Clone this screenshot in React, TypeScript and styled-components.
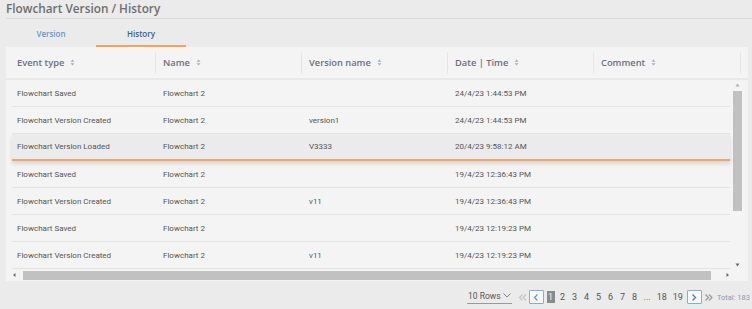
import React from "react";
import styled, { createGlobalStyle } from "styled-components";

const GlobalStyle = createGlobalStyle`
  html, body {
    margin: 0;
    padding: 0;
    background: #ebebeb;
  }
  body {
    font-family: Roboto, "Liberation Sans", sans-serif;
  }
`;

interface HistoryRow {
  eventType: string;
  name: string;
  versionName: string;
  dateTime: string;
  comment: string;
}

const rows: HistoryRow[] = [
  { eventType: "Flowchart Saved", name: "Flowchart 2", versionName: "", dateTime: "24/4/23 1:44:53 PM", comment: "" },
  { eventType: "Flowchart Version Created", name: "Flowchart 2", versionName: "version1", dateTime: "24/4/23 1:44:53 PM", comment: "" },
  { eventType: "Flowchart Version Loaded", name: "Flowchart 2", versionName: "V3333", dateTime: "20/4/23 9:58:12 AM", comment: "" },
  { eventType: "Flowchart Saved", name: "Flowchart 2", versionName: "", dateTime: "19/4/23 12:36:43 PM", comment: "" },
  { eventType: "Flowchart Version Created", name: "Flowchart 2", versionName: "v11", dateTime: "19/4/23 12:36:43 PM", comment: "" },
  { eventType: "Flowchart Saved", name: "Flowchart 2", versionName: "", dateTime: "19/4/23 12:19:23 PM", comment: "" },
  { eventType: "Flowchart Version Created", name: "Flowchart 2", versionName: "v11", dateTime: "19/4/23 12:19:23 PM", comment: "" }
];

const columns = ["Event type", "Name", "Version name", "Date | Time", "Comment"];
const pages = ["2", "3", "4", "5", "6", "7", "8", "...", "18", "19"];

const PageStyled = styled.div`
  width: 752px;
  height: 309px;
  padding-left: 6px;
  box-sizing: border-box;
  overflow: hidden;
`;

const TitleStyled = styled.div`
  height: 19px;
  box-sizing: border-box;
  border-bottom: 1px solid #d9d9d9;
  font-family: "Open Sans", sans-serif;
  font-weight: 600;
  font-size: 11.8px;
  line-height: 16px;
  color: #6e6e6e;
`;

const TabsStyled = styled.div`
  display: flex;
  height: 28px;
`;

const TabStyled = styled.div<{ $active?: boolean }>`
  width: 90px;
  display: flex;
  align-items: center;
  justify-content: center;
  box-sizing: border-box;
  padding-top: 2px;
  font-family: "Open Sans", sans-serif;
  font-size: 8px;
  font-weight: 600;
  color: ${(p) => (p.$active ? "#3b5d8f" : "#5d9ad0")};
  border-bottom: 2px solid ${(p) => (p.$active ? "#f3a35e" : "transparent")};
`;

const PanelStyled = styled.div`
  width: 742px;
  height: 234px;
  background: #f4f4f4;
  display: flex;
  flex-direction: column;
`;

const HeaderRowStyled = styled.div`
  display: grid;
  grid-template-columns: 146px 146px 146px 146px 147px;
  height: 31px;
  padding-left: 4px;
  border-bottom: 2px solid #e9e9e9;
  align-items: center;
`;

const HeaderCellStyled = styled.div`
  height: 22px;
  display: flex;
  align-items: center;
  gap: 6px;
  padding-left: 7px;
  border-right: 1px solid #e6e6e6;
  font-family: "Open Sans", sans-serif;
  font-weight: 600;
  font-size: 9.3px;
  color: #6b6f82;
`;

const SortIconStyled = styled.svg`
  width: 5px;
  height: 7px;
`;

const BodyWrapStyled = styled.div`
  display: flex;
  height: 189px;
  padding-left: 6px;
`;

const RowsStyled = styled.div`
  width: 718px;
  display: flex;
  flex-direction: column;
`;

const RowStyled = styled.div<{ $selected?: boolean }>`
  display: grid;
  grid-template-columns: 146px 146px 146px 146px 1fr;
  padding-left: 5px;
  height: 27px;
  box-sizing: border-box;
  align-items: center;
  font-size: 8px;
  color: #555;
  background: ${(p) => (p.$selected ? "#ebebeb" : "#f4f4f4")};
  border-bottom: ${(p) => (p.$selected ? "2px solid #eba66a" : "1px solid #e4e4e4")};
  box-shadow: ${(p) => (p.$selected ? "0 3px 4px rgba(0,0,0,0.12)" : "none")};
  position: relative;
  z-index: ${(p) => (p.$selected ? 1 : 0)};
`;

const VScrollStyled = styled.div`
  width: 12px;
  display: flex;
  flex-direction: column;
  align-items: center;
  padding: 3px 0 2px 2px;
  box-sizing: border-box;
`;

const ArrowStyled = styled.svg`
  width: 5px;
  height: 4px;
  flex: none;
`;

const VThumbStyled = styled.div`
  width: 9px;
  height: 120px;
  margin-top: 4px;
  background: #c1c1c1;
`;

const SpacerStyled = styled.div`
  flex: 1;
`;

const HScrollStyled = styled.div`
  display: flex;
  align-items: center;
  height: 12px;
  margin-left: 6px;
  width: 718px;
`;

const HThumbStyled = styled.div`
  width: 688px;
  height: 9px;
  margin-left: 6px;
  background: #c1c1c1;
`;

const PagerStyled = styled.div`
  display: flex;
  align-items: center;
  justify-content: flex-end;
  height: 28px;
  padding: 4px 2px 0 0;
  box-sizing: border-box;
  font-size: 8.5px;
  color: #555;
`;

const RowsSelectStyled = styled.div`
  display: flex;
  align-items: center;
  gap: 2px;
  padding: 0 1px 2px;
  border-bottom: 1px solid #9a9a9a;
  margin-right: 5px;
  color: #555;
`;

const PageNavStyled = styled.div<{ $boxed?: boolean }>`
  width: ${(p) => (p.$boxed ? "15px" : "9px")};
  height: 14px;
  box-sizing: border-box;
  display: flex;
  align-items: center;
  justify-content: center;
  border: ${(p) => (p.$boxed ? "1px solid #7fb0e4" : "none")};
  border-radius: 1px;
  background: ${(p) => (p.$boxed ? "#fafafa" : "transparent")};
  margin: 0 1px;
`;

const PageNumStyled = styled.div<{ $current?: boolean }>`
  min-width: 6px;
  height: 12px;
  padding: 0 1px;
  margin: 0 2px;
  display: flex;
  align-items: center;
  justify-content: center;
  background: ${(p) => (p.$current ? "#8a8a8a" : "transparent")};
  color: ${(p) => (p.$current ? "#f0f0f0" : "#555")};
  font-size: 9px;
`;

const TotalStyled = styled.div`
  margin-left: 3px;
  font-size: 7.5px;
  color: #8a9ab0;
`;

const SortIcon = () => (
  <SortIconStyled viewBox="0 0 5 7">
    <path d="M2.5 0.5 L4.5 2.8 L0.5 2.8 Z M2.5 6.5 L4.5 4.2 L0.5 4.2 Z" fill="#a9adb8" />
  </SortIconStyled>
);

const Triangle = ({ dir }: { dir: "up" | "down" | "left" | "right" }) => {
  const d = {
    up: "M2.5 0.5 L4.5 3.5 L0.5 3.5 Z",
    down: "M0.5 0.5 L4.5 0.5 L2.5 3.5 Z",
    left: "M3.5 0 L3.5 4 L1 2 Z",
    right: "M1.5 0 L1.5 4 L4 2 Z"
  }[dir];
  return (
    <ArrowStyled viewBox="0 0 5 4">
      <path d={d} fill={dir === "up" ? "#b0b0b0" : "#6a6a6a"} />
    </ArrowStyled>
  );
};

const Chevron = ({ dir, color, double }: { dir: "left" | "right"; color: string; double?: boolean }) => (
  <svg width={double ? 9 : 6} height="9" viewBox={double ? "0 0 9 9" : "0 0 6 9"}>
    {dir === "left" ? (
      <>
        <path d="M4.5 1.5 L1.5 4.5 L4.5 7.5" fill="none" stroke={color} strokeWidth="1.2" />
        {double && <path d="M8 1.5 L5 4.5 L8 7.5" fill="none" stroke={color} strokeWidth="1.2" />}
      </>
    ) : (
      <>
        <path d="M1.5 1.5 L4.5 4.5 L1.5 7.5" fill="none" stroke={color} strokeWidth="1.3" />
        {double && <path d="M5 1.5 L8 4.5 L5 7.5" fill="none" stroke={color} strokeWidth="1.2" />}
      </>
    )}
  </svg>
);

const App = () => (
  <PageStyled>
    <GlobalStyle />
    <TitleStyled>Flowchart Version / History</TitleStyled>
    <TabsStyled>
      <TabStyled>Version</TabStyled>
      <TabStyled $active>History</TabStyled>
    </TabsStyled>
    <PanelStyled>
      <HeaderRowStyled>
        {columns.map((c) => (
          <HeaderCellStyled key={c}>
            {c}
            <SortIcon />
          </HeaderCellStyled>
        ))}
      </HeaderRowStyled>
      <BodyWrapStyled>
        <RowsStyled>
          {rows.map((r, i) => (
            <RowStyled key={i} $selected={i === 2}>
              <div>{r.eventType}</div>
              <div>{r.name}</div>
              <div>{r.versionName}</div>
              <div>{r.dateTime}</div>
              <div>{r.comment}</div>
            </RowStyled>
          ))}
        </RowsStyled>
        <VScrollStyled>
          <Triangle dir="up" />
          <VThumbStyled />
          <SpacerStyled />
          <Triangle dir="down" />
        </VScrollStyled>
      </BodyWrapStyled>
      <HScrollStyled>
        <Triangle dir="left" />
        <HThumbStyled />
        <SpacerStyled />
        <Triangle dir="right" />
      </HScrollStyled>
    </PanelStyled>
    <PagerStyled>
      <RowsSelectStyled>
        10 Rows
        <svg width="8" height="5" viewBox="0 0 8 5">
          <path d="M0.5 0.5 L4 4 L7.5 0.5" fill="none" stroke="#777" strokeWidth="0.9" />
        </svg>
      </RowsSelectStyled>
      <PageNavStyled>
        <Chevron dir="left" color="#c6c6c6" double />
      </PageNavStyled>
      <PageNavStyled $boxed>
        <Chevron dir="left" color="#5d9ad0" />
      </PageNavStyled>
      <PageNumStyled $current>1</PageNumStyled>
      {pages.map((p) => (
        <PageNumStyled key={p}>{p}</PageNumStyled>
      ))}
      <PageNavStyled $boxed>
        <Chevron dir="right" color="#3b7dd0" />
      </PageNavStyled>
      <PageNavStyled>
        <Chevron dir="right" color="#9a9a9a" double />
      </PageNavStyled>
      <TotalStyled>Total: 183</TotalStyled>
    </PagerStyled>
  </PageStyled>
);

export default App;
